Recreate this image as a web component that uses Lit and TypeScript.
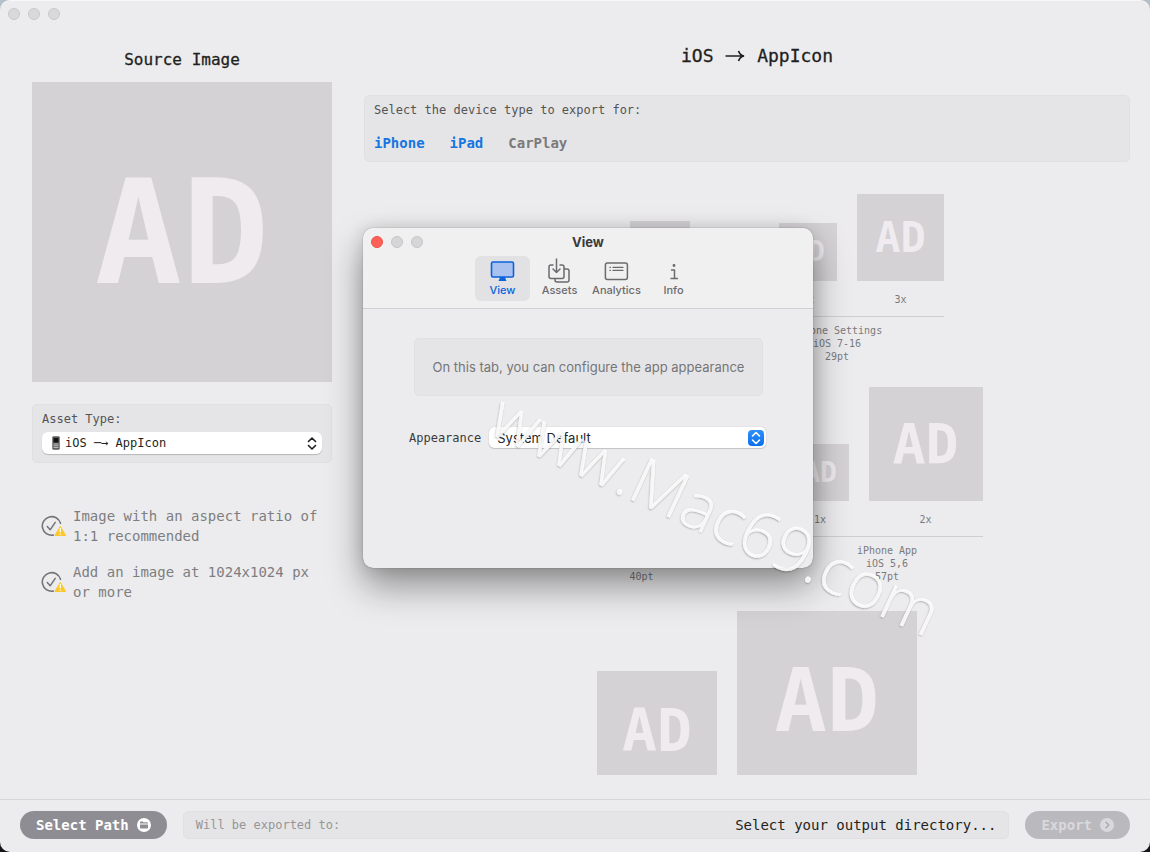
import { LitElement, html, css, svg, nothing } from "lit";
import { customElement, property } from "lit/decorators.js";

interface Tile {
  scale?: string;
  size: number;
}
interface Group {
  tiles: Tile[];
  caption?: string[];
}

const rows: Group[][] = [
  [
    { tiles: [{ scale: "2x", size: 40 }, { scale: "3x", size: 60 }], caption: ["iPhone Notification", "iOS 7-16", "20pt"] },
    {
      tiles: [{ scale: "1x", size: 29 }, { scale: "2x", size: 58 }, { scale: "3x", size: 87 }],
      caption: ["iPhone Settings", "iOS 7-16", "29pt"],
    },
  ],
  [
    { tiles: [{ scale: "2x", size: 80 }, { scale: "3x", size: 120 }], caption: ["iPhone Spotlight", "iOS 7-16", "40pt"] },
    { tiles: [{ scale: "1x", size: 57 }, { scale: "2x", size: 114 }], caption: ["iPhone App", "iOS 5,6", "57pt"] },
  ],
  [{ tiles: [{ size: 120 }, { size: 180 }] }],
];

const arrow = html`<svg class="arrow" viewBox="0 0 22 12" role="img" aria-label="to">
  <path d="M1.500 6H20M14.500 1C15.500 3.800 17.500 5.500 20 6C17.500 6.500 15.500 8.200 14.500 11" />
</svg>`;

const chevrons = svg`<path d="M1.500 4.500L5 1L8.500 4.500M1.500 8.500L5 12L8.500 8.500" />`;

@customElement("icon-tile")
export class IconTile extends LitElement {
  @property({ type: Number }) size = 60;

  static styles = css`
    :host {
      display: block;
      flex: none;
    }
    .tile {
      display: flex;
      align-items: center;
      justify-content: center;
      background: #d4d2d5;
      color: #efebef;
      font-family: "DejaVu Sans Mono", monospace;
      font-weight: 700;
      line-height: 1;
    }
  `;

  render() {
    const s = this.size;
    return html`<div class="tile" style="width:${s}px;height:${s}px;font-size:${Math.round(s * 0.483)}px">AD</div>`;
  }
}

@customElement("settings-window")
export class SettingsWindow extends LitElement {
  static styles = css`
    :host {
      display: flex;
      flex-direction: column;
      box-sizing: border-box;
      border-radius: 10px;
      background: #ececee;
      color: #3a3a3c;
      font-family: Inter, "Liberation Sans", sans-serif;
      font-size: 13px;
      box-shadow: 0 0 1px rgba(0, 0, 0, 0.6), 0 0 16px rgba(0, 0, 0, 0.12), 0 18px 36px rgba(0, 0, 0, 0.4);
    }
    .head {
      background: #f1f0f1;
      border-bottom: 1px solid #d0d0d2;
      border-radius: 10px 10px 0 0;
      padding-bottom: 7px;
    }
    .bar {
      display: grid;
      grid-template-columns: 1fr auto 1fr;
      align-items: center;
      height: 28px;
      padding: 0 8px;
    }
    .lights {
      display: flex;
      gap: 8px;
    }
    .light {
      box-sizing: border-box;
      width: 12px;
      height: 12px;
      padding: 0;
      border: 1px solid #c6c6c8;
      border-radius: 50%;
      background: #d6d6d8;
    }
    .close {
      background: #fe5f57;
      border-color: #e8524b;
    }
    h2 {
      margin: 0;
      font-size: 13px;
      line-height: 16px;
      font-weight: 700;
    }
    .tabs {
      display: flex;
      justify-content: center;
      gap: 2px;
    }
    .tab {
      display: flex;
      flex-direction: column;
      align-items: center;
      box-sizing: border-box;
      min-width: 55px;
      height: 45px;
      padding: 1px 3px;
      border: 0;
      border-radius: 6px;
      background: none;
      color: #6b6b6e;
      font: 500 11px/14px Inter, "Liberation Sans", sans-serif;
    }
    .tab svg {
      width: 26px;
      height: 26px;
      fill: none;
      stroke: currentColor;
      stroke-width: 1.500;
      stroke-linecap: round;
      stroke-linejoin: round;
    }
    .tab.on {
      background: #e2e2e4;
      color: #0b62dd;
    }
    .body {
      display: flex;
      flex-direction: column;
      gap: 31px;
      padding: 29px 47px 0 46px;
    }
    .note {
      margin: 0 3px 0 5px;
      padding: 20px 0;
      border: 1px solid #e0e0e2;
      border-radius: 5px;
      background: #e5e5e7;
      color: #757578;
      text-align: center;
      line-height: 16px;
      white-space: nowrap;
    }
    .row {
      display: flex;
      align-items: center;
      gap: 8px;
    }
    label {
      color: #3a3a3c;
      font: 12px/16px "DejaVu Sans Mono", monospace;
    }
    .pick {
      display: grid;
      flex: 1;
      align-items: center;
    }
    select {
      grid-area: 1 / 1;
      appearance: none;
      height: 21px;
      padding: 0 8px;
      border: 0;
      border-radius: 5px;
      background: #fff;
      color: #262628;
      font: 13px/16px Inter, "Liberation Sans", sans-serif;
      box-shadow: 0 0 1px rgba(0, 0, 0, 0.3), 0 1px 1px rgba(0, 0, 0, 0.15);
    }
    .knob {
      grid-area: 1 / 1;
      justify-self: end;
      margin-right: 2px;
      width: 16px;
      height: 16px;
      border-radius: 4px;
      background: linear-gradient(#2f8ff7, #0a6ff0);
      pointer-events: none;
      fill: none;
      stroke: #fff;
      stroke-width: 1.600;
      stroke-linecap: round;
      stroke-linejoin: round;
    }
  `;

  render() {
    return html`
      <div class="head">
        <div class="bar">
          <div class="lights">
            <button class="light close" aria-label="Close"></button>
            <button class="light" aria-label="Minimize" disabled></button>
            <button class="light" aria-label="Zoom" disabled></button>
          </div>
          <h2>View</h2>
        </div>
        <div class="tabs">
          <button class="tab on">
            <svg viewBox="0 0 26 26">
              <rect x="1.500" y="5" width="22" height="15" rx="1.500" fill="#a9c1ef" stroke-width="1.600" />
              <path d="M10 20.500h5v1.500l1 1.500h-7l1-1.500z" fill="currentColor" stroke-width="1" />
            </svg>
            View
          </button>
          <button class="tab">
            <svg viewBox="0 0 26 26">
              <path d="M6 8H4a2 2 0 0 0-2 2v9.500a2 2 0 0 0 2 2H15a2 2 0 0 0 2-2V10a2 2 0 0 0-2-2H13" />
              <path d="M9.500 2V15.500M6 12L9.500 15.500L13 12" />
              <path d="M17.500 12H20a2 2 0 0 1 2 2v9a2 2 0 0 1-2 2H10a2 2 0 0 1-2-2V22" />
            </svg>
            Assets
          </button>
          <button class="tab">
            <svg viewBox="0 0 26 26">
              <rect x="1.400" y="6" width="22" height="16.500" rx="2" />
              <path d="M5.900 10.300h.6M9 10.300H19M5.900 13.300h.6M9 13.300H19" stroke-width="1.300" />
            </svg>
            Analytics
          </button>
          <button class="tab">
            <svg viewBox="0 0 26 26">
              <path d="M10 13h3.500v8.500M9.500 21.500h7.500" stroke-linecap="butt" />
              <circle cx="13" cy="8.500" r="1.400" fill="currentColor" stroke="none" />
            </svg>
            Info
          </button>
        </div>
      </div>
      <div class="body">
        <div class="note">On this tab, you can configure the app appearance</div>
        <div class="row">
          <label for="appearance">Appearance</label>
          <div class="pick">
            <select id="appearance">
              <option>System Default</option>
            </select>
            <svg class="knob" viewBox="-3 -1.500 16 16">${chevrons}</svg>
          </div>
        </div>
      </div>
    `;
  }
}

@customElement("app-root")
export class AppRoot extends LitElement {
  static styles = css`
    :host {
      display: block;
      height: 100vh;
      background: linear-gradient(#b4c0c8 50%, #15151a 50%);
      font-family: "DejaVu Sans Mono", monospace;
      color: #1f1f21;
    }
    .window {
      position: relative;
      display: flex;
      flex-direction: column;
      box-sizing: border-box;
      height: 100%;
      overflow: hidden;
      border-top: 1px solid #f7f7f8;
      border-radius: 10px;
      background: #ececee;
    }
    .lights {
      display: flex;
      flex: none;
      align-items: center;
      gap: 8px;
      height: 26px;
      padding: 0 8px;
    }
    .light {
      box-sizing: border-box;
      width: 12px;
      height: 12px;
      padding: 0;
      border: 1px solid #c8c8ca;
      border-radius: 50%;
      background: #d9d9db;
    }
    .main {
      display: flex;
      flex: 1;
      gap: 32px;
      min-height: 0;
      padding: 17px 0 24px 32px;
    }
    .source {
      flex: none;
      width: 300px;
      padding-top: 5px;
    }
    h1,
    h2 {
      margin: 0;
      font-weight: 400;
      text-align: center;
      -webkit-text-stroke: 0.3px currentColor;
    }
    h1 {
      margin-bottom: 11px;
      font-size: 16px;
      line-height: 22px;
    }
    h2 {
      margin-bottom: 27px;
      font-size: 18px;
      line-height: 24px;
    }
    .arrow {
      width: 22px;
      height: 12px;
      fill: none;
      stroke: currentColor;
      stroke-width: 1.700;
    }
    .box {
      box-sizing: border-box;
      border: 1px solid #e0e0e2;
      border-radius: 5px;
      background: #e5e5e7;
    }
    .asset {
      margin-top: 22px;
      padding: 6px 9px 8px;
    }
    .asset label,
    .devices p {
      display: block;
      margin: 0;
      color: #545456;
      font-size: 12px;
      line-height: 16px;
    }
    .pick {
      display: grid;
      align-items: center;
      margin-top: 5px;
    }
    .pick select {
      grid-area: 1 / 1;
      appearance: none;
      height: 22px;
      padding: 0 23px;
      border: 0;
      border-radius: 6px;
      background: #fff;
      color: #1f1f21;
      font: 12px/16px "DejaVu Sans Mono", monospace;
      box-shadow: 0 1px 1px rgba(0, 0, 0, 0.2);
    }
    .pick svg {
      grid-area: 1 / 1;
      z-index: 1;
      pointer-events: none;
    }
    .phone {
      width: 8px;
      height: 14px;
      margin-left: 10px;
    }
    .updown {
      justify-self: end;
      width: 10px;
      height: 13px;
      margin-right: 5px;
      fill: none;
      stroke: #1f1f21;
      stroke-width: 1.600;
      stroke-linecap: round;
      stroke-linejoin: round;
    }
    .hints {
      display: flex;
      flex-direction: column;
      gap: 16px;
      margin: 43px 0 0;
      padding: 0 0 0 9px;
      list-style: none;
      color: #7e7e81;
      font-size: 14px;
      line-height: 20px;
    }
    .hints li {
      display: flex;
      align-items: center;
      gap: 6px;
    }
    .hints svg {
      flex: none;
      width: 26px;
      height: 24px;
    }
    .export {
      display: flex;
      flex: 1;
      flex-direction: column;
      min-width: 0;
    }
    .devices {
      flex: none;
      height: 67px;
      margin-right: 20px;
      padding: 6px 9px;
    }
    .types {
      display: flex;
      gap: 25px;
      margin-top: 15px;
    }
    .type {
      padding: 0;
      border: 0;
      background: none;
      color: #7a7a7d;
      font: 700 14px/20px "DejaVu Sans Mono", monospace;
    }
    .type.on {
      color: #1675e0;
    }
    .gallery {
      display: flex;
      flex: 1;
      flex-direction: column;
      gap: 18px;
      min-height: 0;
      overflow: hidden;
      padding-top: 32px;
    }
    .line {
      display: flex;
      flex: none;
      justify-content: center;
      align-items: flex-end;
      gap: 40px;
    }
    .line:last-child {
      padding-top: 10px;
    }
    .tiles {
      display: flex;
      align-items: flex-end;
      gap: 20px;
      padding-bottom: 10px;
      border-bottom: 1px solid #cfcfd2;
    }
    .cell,
    .caption {
      color: #7a7a7d;
      font-size: 10px;
      line-height: 13px;
      text-align: center;
    }
    .scale {
      padding-top: 12px;
    }
    .group {
      display: grid;
      justify-content: center;
    }
    .caption {
      display: flex;
      flex-direction: column;
      align-items: center;
      width: 0;
      min-width: 100%;
      padding-top: 7px;
      white-space: nowrap;
    }
    footer {
      display: flex;
      flex: none;
      gap: 16px;
      padding: 11px 20px 13px;
      border-top: 1px solid #d6d6d8;
    }
    .pill {
      display: flex;
      align-items: center;
      gap: 8px;
      height: 28px;
      padding: 0 16px;
      border: 0;
      border-radius: 14px;
      background: #8e8d93;
      color: #fff;
      font: 700 14px/20px "DejaVu Sans Mono", monospace;
    }
    .pill svg {
      width: 14px;
      height: 14px;
    }
    .pill:disabled {
      background: #bab9be;
      color: #d9d8dc;
    }
    .path {
      display: flex;
      flex: 1;
      align-items: center;
      justify-content: space-between;
      height: 28px;
      padding: 0 12px;
      font-size: 14px;
    }
    .path span {
      color: #959598;
      font-size: 12px;
    }
    settings-window {
      position: absolute;
      top: 227px;
      left: 363px;
      width: 450px;
      height: 340px;
    }
    .mark {
      position: absolute;
      top: 373px;
      left: 513px;
      color: rgba(255, 255, 255, 0.9);
      font: 300 64px/80px "Open Sans", sans-serif;
      -webkit-text-stroke: 0.6px rgba(255, 255, 255, 0.9);
      text-shadow: 0 1px 2px rgba(0, 0, 0, 0.35);
      transform: rotate(25deg);
      transform-origin: 0 0;
      pointer-events: none;
    }
  `;

  private hint(text: string) {
    return html`<li>
      <svg viewBox="0 0 26 24" fill="none" stroke="#747477" stroke-linecap="round" stroke-linejoin="round">
        <path d="M19.500 9.200A9.300 9.300 0 1 0 12.200 21.100" stroke-width="1.600" />
        <path d="M6.300 12.500L9.200 15.800L14.200 8.300" stroke-width="1.500" />
        <path d="M19.300 12.800L24.300 21.300H14.300Z" fill="#fbc92b" stroke="#fbc92b" stroke-width="1.400" />
        <path d="M19.300 14.500v3.400M19.300 20.200v.1" stroke="#fff" stroke-width="1.300" />
      </svg>
      <span>${text}</span>
    </li>`;
  }

  private group(g: Group) {
    return html`<div class="group">
      <div class="tiles">
        ${g.tiles.map(
          (t) => html`<div class="cell">
            <icon-tile .size=${t.size}></icon-tile>
            ${t.scale ? html`<div class="scale">${t.scale}</div>` : nothing}
          </div>`
        )}
      </div>
      ${g.caption ? html`<div class="caption">${g.caption.map((c) => html`<span>${c}</span>`)}</div>` : nothing}
    </div>`;
  }

  render() {
    return html`
      <div class="window">
        <div class="lights">
          <button class="light" aria-label="Close"></button>
          <button class="light" aria-label="Minimize"></button>
          <button class="light" aria-label="Zoom"></button>
        </div>
        <div class="main">
          <section class="source">
            <h1>Source Image</h1>
            <icon-tile .size=${300}></icon-tile>
            <div class="box asset">
              <label for="asset">Asset Type:</label>
              <div class="pick">
                <select id="asset">
                  <option>iOS ─→ AppIcon</option>
                </select>
                <svg class="phone" viewBox="0 0 8 14">
                  <rect x=".3" y=".3" width="7.400" height="13.400" rx="1.200" fill="#5a5a5c" />
                  <rect x="1.600" y="2" width="4.800" height="4.500" fill="#111" />
                  <path d="M1.500 8h5M1.500 9.800h5M1.500 11.600h5" stroke="#c4c4c6" stroke-width="1" />
                </svg>
                <svg class="updown" viewBox="0 0 10 13">${chevrons}</svg>
              </div>
            </div>
            <ul class="hints">
              ${this.hint("Image with an aspect ratio of 1:1 recommended")}
              ${this.hint("Add an image at 1024x1024 px or more")}
            </ul>
          </section>
          <section class="export">
            <h2>iOS ${arrow} AppIcon</h2>
            <div class="box devices">
              <p>Select the device type to export for:</p>
              <div class="types">
                <button class="type on">iPhone</button>
                <button class="type on">iPad</button>
                <button class="type">CarPlay</button>
              </div>
            </div>
            <div class="gallery">
              ${rows.map((r) => html`<div class="line">${r.map((g) => this.group(g))}</div>`)}
            </div>
          </section>
        </div>
        <footer>
          <button class="pill">
            Select Path
            <svg viewBox="0 0 14 14">
              <circle cx="7" cy="7" r="7" fill="#fff" />
              <path d="M3 5.600V4.300q0-.9.900-.9h1.900l.8.800h3.500q.9 0 .9.900v.5zM3 6.500h8v3q0 .9-.9.900H3.900q-.9 0-.9-.9z" fill="#8e8d93" />
            </svg>
          </button>
          <div class="box path"><span>Will be exported to:</span>Select your output directory...</div>
          <button class="pill" disabled>
            Export
            <svg viewBox="0 0 14 14">
              <circle cx="7" cy="7" r="7" fill="#d9d8dc" />
              <path d="M6 4.200L8.800 7L6 9.800" fill="none" stroke="#aaa9ae" stroke-width="1.500" stroke-linecap="round" stroke-linejoin="round" />
            </svg>
          </button>
        </footer>
        <settings-window role="dialog" aria-label="View"></settings-window>
        <div class="mark">www.Mac69.com</div>
      </div>
    `;
  }
}
